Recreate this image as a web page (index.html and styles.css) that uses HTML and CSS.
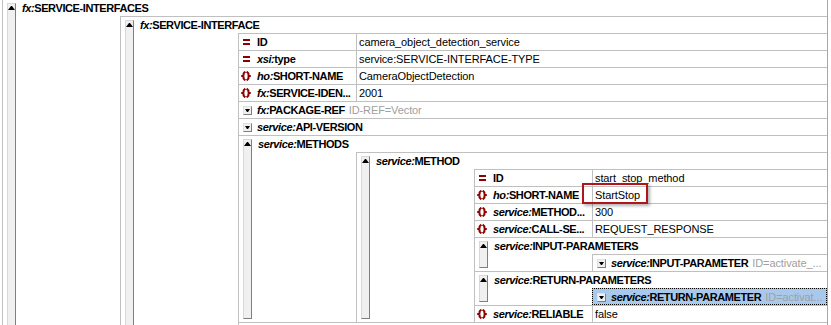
FILE: index.html
```html
<!DOCTYPE html>
<html lang="en">
  <head>
    <meta charset="UTF-8" />
    <title>SERVICE-INTERFACES grid</title>
    <link rel="stylesheet" href="styles.css">
  </head>
  <body>
    <div class="el root">
      <span class="bar"></span>
      <div class="head"><i>fx:</i>SERVICE-INTERFACES</div>
      <div class="kids">
        <div class="el">
          <span class="bar"></span>
          <div class="head"><i>fx:</i>SERVICE-INTERFACE</div>
          <div class="kids">
            <div class="attr">
              <div class="name"><span class="ico"><b class="eq"></b></span>ID</div>
              <div class="val">camera_object_detection_service</div>
            </div>
            <div class="attr">
              <div class="name"><span class="ico"><b class="eq"></b></span><i>xsi:</i>type</div>
              <div class="val">service:SERVICE-INTERFACE-TYPE</div>
            </div>
            <div class="attr">
              <div class="name">
                <span class="ico"><svg class="brace" viewBox="0 0 10 10"><path d="M4.3 .6L2.6 2.4V4L1 5 2.6 6V7.6L4.3 9.4M5.7 .6L7.4 2.4V4L9 5 7.4 6V7.6L5.7 9.4"/></svg></span><i>ho:</i>SHORT-NAME
              </div>
              <div class="val">CameraObjectDetection</div>
            </div>
            <div class="attr">
              <div class="name">
                <span class="ico"><svg class="brace" viewBox="0 0 10 10"><path d="M4.3 .6L2.6 2.4V4L1 5 2.6 6V7.6L4.3 9.4M5.7 .6L7.4 2.4V4L9 5 7.4 6V7.6L5.7 9.4"/></svg></span><i>fx:</i>SERVICE-IDEN...
              </div>
              <div class="val">2001</div>
            </div>
            <div class="leaf"><span class="btn"></span><i>fx:</i>PACKAGE-REF<span class="hint">ID-REF=Vector</span></div>
            <div class="leaf"><span class="btn"></span><i>service:</i>API-VERSION</div>
            <div class="el">
              <span class="bar"></span>
              <div class="head"><i>service:</i>METHODS</div>
              <div class="kids">
                <div class="el">
                  <span class="bar"></span>
                  <div class="head"><i>service:</i>METHOD</div>
                  <div class="kids">
                    <div class="attr">
                      <div class="name"><span class="ico"><b class="eq"></b></span>ID</div>
                      <div class="val">start_stop_method</div>
                    </div>
                    <div class="attr">
                      <div class="name">
                        <span class="ico"><svg class="brace" viewBox="0 0 10 10"><path d="M4.3 .6L2.6 2.4V4L1 5 2.6 6V7.6L4.3 9.4M5.7 .6L7.4 2.4V4L9 5 7.4 6V7.6L5.7 9.4"/></svg></span><i>ho:</i>SHORT-NAME
                      </div>
                      <div class="val mark">StartStop<span class="callout"></span></div>
                    </div>
                    <div class="attr">
                      <div class="name">
                        <span class="ico"><svg class="brace" viewBox="0 0 10 10"><path d="M4.3 .6L2.6 2.4V4L1 5 2.6 6V7.6L4.3 9.4M5.7 .6L7.4 2.4V4L9 5 7.4 6V7.6L5.7 9.4"/></svg></span><i>service:</i>METHOD...
                      </div>
                      <div class="val">300</div>
                    </div>
                    <div class="attr">
                      <div class="name">
                        <span class="ico"><svg class="brace" viewBox="0 0 10 10"><path d="M4.3 .6L2.6 2.4V4L1 5 2.6 6V7.6L4.3 9.4M5.7 .6L7.4 2.4V4L9 5 7.4 6V7.6L5.7 9.4"/></svg></span><i>service:</i>CALL-SE...
                      </div>
                      <div class="val">REQUEST_RESPONSE</div>
                    </div>
                    <div class="el">
                      <span class="bar"></span>
                      <div class="head"><i>service:</i>INPUT-PARAMETERS</div>
                      <div class="kids">
                        <div class="leaf"><span class="btn"></span><i>service:</i>INPUT-PARAMETER<span class="hint">ID=activate_...</span></div>
                      </div>
                    </div>
                    <div class="el">
                      <span class="bar"></span>
                      <div class="head"><i>service:</i>RETURN-PARAMETERS</div>
                      <div class="kids">
                        <div class="leaf sel"><span class="btn"></span><i>service:</i>RETURN-PARAMETER<span class="hint">ID=activat...</span></div>
                      </div>
                    </div>
                    <div class="attr">
                      <div class="name">
                        <span class="ico"><svg class="brace" viewBox="0 0 10 10"><path d="M4.3 .6L2.6 2.4V4L1 5 2.6 6V7.6L4.3 9.4M5.7 .6L7.4 2.4V4L9 5 7.4 6V7.6L5.7 9.4"/></svg></span><i>service:</i>RELIABLE
                      </div>
                      <div class="val">false</div>
                    </div>
                  </div>
                </div>
              </div>
            </div>
            <div class="leaf"></div>
          </div>
        </div>
      </div>
    </div>
  </body>
</html>
```

FILE: styles.css
```css
body {
  margin: 0;
  padding-left: 2px;
  background: #fff;
  color: #000;
  font-family: "Liberation Sans", Arial, sans-serif;
  font-size: 11px;
  overflow: hidden;
}
/* element block: collapse bar + header, children start one column in */
.el {
  display: grid;
  grid-template-columns: 117px 1fr;
  grid-template-rows: 16px auto;
  border-left: 1px solid #c0c0c0;
  border-top: 1px solid #c0c0c0;
}
.root {
  width: 826px;
  box-sizing: border-box;
  border-top: 0;
  border-right: 1px solid #a8a8a8;
}
.bar {
  grid-column: 1;
  grid-row: 1 / 3;
  justify-self: start;
  width: 9px;
  margin: 3px 0 3px 4px;
  box-sizing: border-box;
  border: 1px solid;
  border-color: #d8d8d8 #7f7f7f #7f7f7f #d8d8d8;
  background: #f0f0f0;
}
.bar::before {
  content: "";
  display: block;
  width: 1px;
  height: 0;
  margin-top: 2px;
  border-left: 3px solid transparent;
  border-right: 3px solid transparent;
  border-bottom: 4px solid #000;
}
.head {
  grid-column: 1 / 3;
  grid-row: 1;
  padding-left: 19px;
  line-height: 16px;
  font-weight: bold;
  letter-spacing: -0.4px;
  white-space: nowrap;
}
.kids {
  grid-column: 2;
  grid-row: 2;
  display: flex;
  flex-direction: column;
  min-width: 0;
}
/* attribute / simple child rows */
.attr {
  display: grid;
  grid-template-columns: 117px 1fr;
  height: 16px;
  line-height: 16px;
  border-left: 1px solid #c0c0c0;
  border-top: 1px solid #c0c0c0;
}
.name {
  display: flex;
  align-items: center;
  padding-left: 2px;
  font-weight: bold;
  letter-spacing: -0.4px;
  white-space: nowrap;
  overflow: hidden;
}
.ico {
  flex: none;
  width: 16px;
  display: flex;
  align-items: center;
}
.eq {
  width: 7px;
  height: 2px;
  margin-left: 2px;
  border-top: 2px solid #8b0000;
  border-bottom: 2px solid #8b0000;
}
.brace {
  width: 10px;
  height: 10px;
}
.brace path {
  fill: none;
  stroke: #8b0000;
  stroke-width: 2;
}
.val {
  padding-left: 2px;
  border-left: 1px solid #c0c0c0;
  letter-spacing: -0.1px;
  white-space: nowrap;
  overflow: hidden;
}
.mark {
  position: relative;
  overflow: visible;
}
.callout {
  position: absolute;
  left: -11px;
  top: -4px;
  width: 66px;
  height: 21px;
  box-sizing: border-box;
  border: 2px solid #b2141c;
  box-shadow: 2px 2px 3px rgba(0, 0, 0, 0.3);
}
/* collapsed element */
.leaf {
  display: flex;
  align-items: center;
  height: 16px;
  padding-left: 4px;
  border-left: 1px solid #c0c0c0;
  border-top: 1px solid #c0c0c0;
  font-weight: bold;
  letter-spacing: -0.4px;
  white-space: nowrap;
  overflow: hidden;
}
.btn {
  flex: none;
  display: flex;
  justify-content: center;
  align-items: center;
  width: 9px;
  height: 9px;
  margin-right: 5px;
  box-sizing: border-box;
  border: 1px solid;
  border-color: #e0e0e0 #7f7f7f #7f7f7f #e0e0e0;
  background: #f0f0f0;
}
.btn::before {
  content: "";
  width: 1px;
  height: 0;
  border-left: 2px solid transparent;
  border-right: 2px solid transparent;
  border-top: 3px solid #000;
}
.hint {
  margin-left: 4px;
  font-weight: normal;
  color: #a0a0a0;
  letter-spacing: -0.1px;
}
.sel {
  background: #a9c9ec;
  outline: 1px dotted #000;
  outline-offset: -1px;
}
```
